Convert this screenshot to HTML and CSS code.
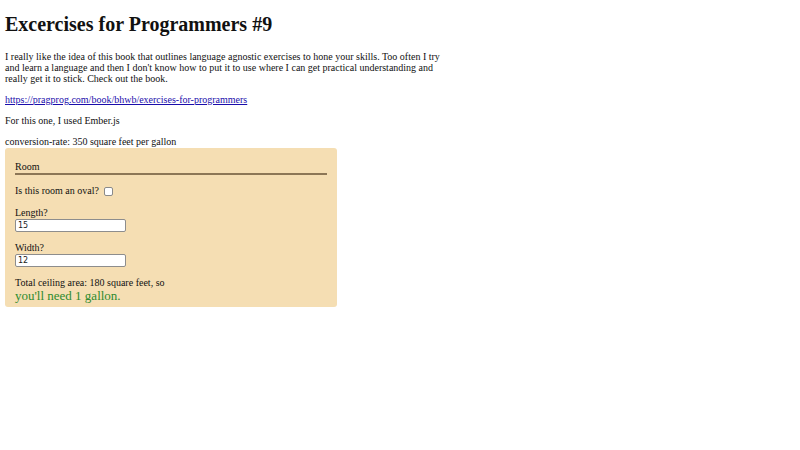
FILE: index.html
```html
<!DOCTYPE html>
<html>
<head>
<meta charset="utf-8">
<link rel="stylesheet" href="styles.css">
</head>
<body>
<div class="page">
  <h1 class="title">Excercises for Programmers #9</h1>
  <p class="text">I really like the idea of this book that outlines language agnostic exercises to hone your skills. Too often I try and learn a language and then I don't know how to put it to use where I can get practical understanding and really get it to stick. Check out the book.</p>
  <p class="text"><a class="link" href="#">https://pragprog.com/book/bhwb/exercises-for-programmers</a></p>
  <p class="text">For this one, I used Ember.js</p>
  <div class="rate">conversion-rate: 350 square feet per gallon</div>
  <div class="room">
    <div class="legend">Room</div>
    <label class="check-row">Is this room an oval? <span class="checkbox"></span></label>
    <div class="field">
      <div class="label">Length?</div>
      <div class="input">15</div>
    </div>
    <div class="field">
      <div class="label">Width?</div>
      <div class="input">12</div>
    </div>
    <div class="result">
      <div class="total">Total ceiling area: 180 square feet, so</div>
      <div class="need">you'll need 1 gallon.</div>
    </div>
  </div>
</div>
</body>
</html>
```

FILE: styles.css
```css
html, body {
  margin: 0;
  padding: 0;
  background: #ffffff;
}
body {
  padding: 5px;
  font-family: "Liberation Serif", "Times New Roman", serif;
  font-size: 10px;
  color: #111;
}
.page {
  width: 445px;
}
.title {
  font-size: 20px;
  font-weight: bold;
  margin: 7px 0 14px;
  line-height: 25px;
  white-space: nowrap;
}
.text {
  margin: 0 0 10px;
  line-height: 11px;
}
.link {
  color: #1a0dab;
  text-decoration: underline;
}
.rate {
  line-height: 12px;
  margin-top: 0;
}
.room {
  width: 312px;
  background: #f5deb3;
  border-radius: 3px;
  padding: 11px 10px 5px;
  display: flex;
  flex-direction: column;
  gap: 10px;
}
.legend {
  line-height: 12px;
  padding-top: 2px;
  border-bottom: 2px solid #8c7656;
}
.check-row {
  display: flex;
  align-items: center;
  gap: 3px;
  line-height: 12px;
}
.checkbox {
  width: 7px;
  height: 7px;
  border: 1px solid #8a8a8a;
  border-radius: 2px;
  background: #fff;
  margin-left: 2px;
}
.field {
  display: flex;
  flex-direction: column;
}
.label {
  line-height: 12px;
}
.input {
  width: 107px;
  height: 11px;
  border: 1px solid #8d8d8d;
  border-radius: 2px;
  background: #fff;
  font-family: "DejaVu Sans", sans-serif;
  font-size: 8px;
  line-height: 11px;
  padding-left: 2px;
  color: #222;
}
.result {
  display: flex;
  flex-direction: column;
}
.total {
  line-height: 12px;
}
.need {
  color: #2e8b2e;
  font-size: 13px;
  line-height: 13px;
}
```
